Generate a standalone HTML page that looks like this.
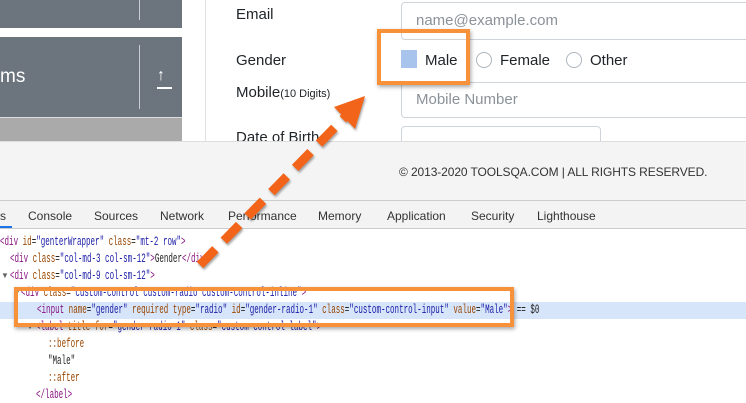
<!DOCTYPE html>
<html><head><style>
*{margin:0;padding:0;box-sizing:border-box}
body{width:746px;height:400px;overflow:hidden;background:#fff;font-family:"Liberation Sans",sans-serif;position:relative}
.a{position:absolute}
.lbl{font-size:15px;color:#212529}
.inp{border:1px solid #ced4da;border-radius:4px;background:#fff;color:#8a9299;font-size:15px;padding-left:14px}
.c{position:absolute;font-family:"Liberation Mono",monospace;font-size:13px;white-space:pre;color:#222;line-height:17px;transform:scaleX(0.58);transform-origin:0 0}
.t{color:#881280}.n{color:#994500}.v{color:#1a1aa6}
.tr{position:absolute;color:#666;font-size:8px;line-height:17px}
.tab{font-size:12px;color:#333;top:209px}
</style></head><body>
<div class="a" style="left:0;top:0;width:182px;height:28px;background:#6c757d"></div>
<div class="a" style="left:139px;top:0;width:1px;height:20px;background:#c9cdd1"></div>
<div class="a" style="left:0;top:37px;width:182px;height:80px;background:#6c757d"></div>
<div class="a" style="left:139px;top:45px;width:1px;height:64px;background:#c9cdd1"></div>
<div class="a" style="left:0;top:66px;color:#fff;font-size:19px">ms</div>
<div class="a" style="left:157px;top:68px;color:#fff;font-size:16px;line-height:16px">↑</div>
<div class="a" style="left:157px;top:87px;width:15px;height:2px;background:#fff"></div>
<div class="a" style="left:0;top:117px;width:182px;height:24px;background:#aaa;border-top:1px solid #ddd"></div>
<div class="a" style="left:205px;top:0;width:1px;height:141px;background:#e0e0e0"></div>
<div class="a lbl" style="left:236px;top:6px">Email</div>
<div class="a lbl" style="left:236px;top:52px">Gender</div>
<div class="a lbl" style="left:236px;top:84px">Mobile<span style="font-size:11px">(10 Digits)</span></div>
<div class="a lbl" style="left:236px;top:129px">Date of Birth</div>
<div class="a inp" style="left:401px;top:2px;width:360px;height:38px;line-height:36px">name@example.com</div>
<div class="a inp" style="left:401px;top:82px;width:360px;height:36px;line-height:34px">Mobile Number</div>
<div class="a inp" style="left:401px;top:126px;width:200px;height:30px"></div>
<div class="a" style="left:401px;top:50px;width:16px;height:18px;background:#a9c4ec"></div>
<div class="a lbl" style="left:425px;top:52px">Male</div>
<div class="a" style="left:476px;top:52px;width:16px;height:16px;border:1px solid #adb5bd;border-radius:50%"></div>
<div class="a lbl" style="left:500px;top:52px">Female</div>
<div class="a" style="left:566px;top:52px;width:16px;height:16px;border:1px solid #adb5bd;border-radius:50%"></div>
<div class="a lbl" style="left:590px;top:52px">Other</div>
<div class="a" style="left:0;top:141px;width:746px;height:59px;background:#f4f4f4;border-top:1px solid #ddd"></div>
<div class="a" style="left:399px;top:165px;font-size:12px;color:#333;letter-spacing:-0.1px">© 2013-2020 TOOLSQA.COM | ALL RIGHTS RESERVED.</div>
<div class="a" style="left:0;top:200px;width:746px;height:29px;background:#f3f3f3;border-top:1px solid #ccc;border-bottom:1px solid #ccc"></div>
<div class="a" style="left:0;top:226px;width:12px;height:2px;background:#1a73e8"></div>
<div class="a tab" style="left:0">s</div>
<div class="a tab" style="left:28px">Console</div>
<div class="a tab" style="left:94px">Sources</div>
<div class="a tab" style="left:160px">Network</div>
<div class="a tab" style="left:228px">Performance</div>
<div class="a tab" style="left:318px">Memory</div>
<div class="a tab" style="left:387px">Application</div>
<div class="a tab" style="left:471px">Security</div>
<div class="a tab" style="left:537px">Lighthouse</div>
<div class="a" style="left:0;top:302px;width:746px;height:17px;background:#d6e5f9"></div>

<div class="c" style="left:0;top:233px"><span class="t">&lt;div</span> <span class="n">id</span>=<span class="v">"genterWrapper"</span> <span class="n">class</span>=<span class="v">"mt-2 row"</span><span class="t">&gt;</span></div>
<div class="c" style="left:10px;top:250px"><span class="t">&lt;div</span> <span class="n">class</span>=<span class="v">"col-md-3 col-sm-12"</span><span class="t">&gt;</span>Gender<span class="t">&lt;/div&gt;</span></div>
<div class="tr" style="left:1px;top:267px">▼</div>
<div class="c" style="left:10px;top:267px"><span class="t">&lt;div</span> <span class="n">class</span>=<span class="v">"col-md-9 col-sm-12"</span><span class="t">&gt;</span></div>
<div class="tr" style="left:13px;top:284px">▼</div>
<div class="c" style="left:21px;top:284px"><span class="t">&lt;div</span> <span class="n">class</span>=<span class="v">"custom-control custom-radio custom-control-inline"</span><span class="t">&gt;</span></div>
<div class="c" style="left:37px;top:301px"><span class="t">&lt;input</span> <span class="n">name</span>=<span class="v">"gender"</span> <span class="n">required</span> <span class="n">type</span>=<span class="v">"radio"</span> <span class="n">id</span>=<span class="v">"gender-radio-1"</span> <span class="n">class</span>=<span class="v">"custom-control-input"</span> <span class="n">value</span>=<span class="v">"Male"</span><span class="t">&gt;</span> == $0</div>
<div class="tr" style="left:26px;top:318px">▼</div>
<div class="c" style="left:36px;top:318px"><span class="t">&lt;label</span> <span class="n">title</span> <span class="n">for</span>=<span class="v">"gender-radio-1"</span> <span class="n">class</span>=<span class="v">"custom-control-label"</span><span class="t">&gt;</span></div>
<div class="c" style="left:48px;top:335px"><span class="n">::before</span></div>
<div class="c" style="left:48px;top:352px">"Male"</div>
<div class="c" style="left:48px;top:369px"><span class="n">::after</span></div>
<div class="c" style="left:36px;top:386px"><span class="t">&lt;/label&gt;</span></div>

<div class="a" style="left:14px;top:287px;width:500px;height:40px;border:4px solid #f7923a;box-shadow:1px 2px 4px rgba(0,0,0,.35)"></div>
<div class="a" style="left:377px;top:29px;width:93px;height:56px;border:4px solid #f7923a;box-shadow:1px 2px 4px rgba(0,0,0,.35)"></div>
<svg class="a" style="left:0;top:0" width="746" height="400">
<g style="filter:drop-shadow(1px 2px 1px rgba(0,0,0,.35))">
<line x1="200" y1="265" x2="345" y2="117" stroke="#f26419" stroke-width="9" stroke-dasharray="22,12"/>
<polygon points="365,96 334,107 355,129" fill="#f26419"/>
</g></svg>
</body></html>
